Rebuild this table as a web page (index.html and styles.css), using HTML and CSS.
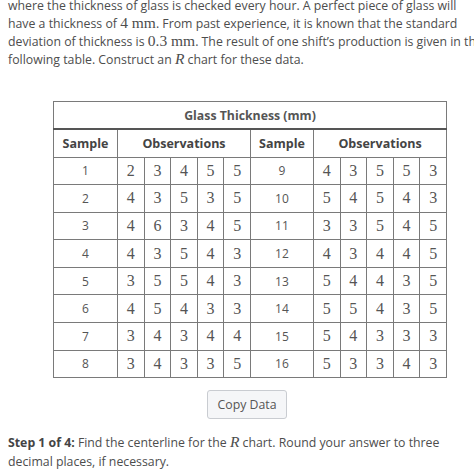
FILE: index.html
```html
<!DOCTYPE html>
<html>
<head>
<meta charset="utf-8">
<link rel="stylesheet" href="styles.css">
</head>
<body>
<div class="page">
  <p class="intro">where the thickness of glass is checked every hour. A perfect piece of glass will have a thickness of <span class="math">4 mm</span>. From past experience, it is known that the standard deviation of thickness is <span class="math">0.3 mm</span>. The result of one shift’s production is given in the following table. Construct an <span class="math var">R</span> chart for these data.</p>

  <table class="data">
    <colgroup>
      <col class="c-sample"><col class="c-obs"><col class="c-obs"><col class="c-obs"><col class="c-obs"><col class="c-obs">
      <col class="c-sample2"><col class="c-obs"><col class="c-obs"><col class="c-obs"><col class="c-obs"><col class="c-obs">
    </colgroup>
    <thead>
      <tr class="title-row"><th colspan="12">Glass Thickness (mm)</th></tr>
      <tr class="head-row"><th>Sample</th><th colspan="5">Observations</th><th>Sample</th><th colspan="5">Observations</th></tr>
    </thead>
    <tbody>
      <tr><td class="s">1</td><td>2</td><td>3</td><td>4</td><td>5</td><td>5</td><td class="s">9</td><td>4</td><td>3</td><td>5</td><td>5</td><td>3</td></tr>
      <tr><td class="s">2</td><td>4</td><td>3</td><td>5</td><td>3</td><td>5</td><td class="s">10</td><td>5</td><td>4</td><td>5</td><td>4</td><td>3</td></tr>
      <tr><td class="s">3</td><td>4</td><td>6</td><td>3</td><td>4</td><td>5</td><td class="s">11</td><td>3</td><td>3</td><td>5</td><td>4</td><td>5</td></tr>
      <tr><td class="s">4</td><td>4</td><td>3</td><td>5</td><td>4</td><td>3</td><td class="s">12</td><td>4</td><td>3</td><td>4</td><td>4</td><td>5</td></tr>
      <tr><td class="s">5</td><td>3</td><td>5</td><td>5</td><td>4</td><td>3</td><td class="s">13</td><td>5</td><td>4</td><td>4</td><td>3</td><td>5</td></tr>
      <tr><td class="s">6</td><td>4</td><td>5</td><td>4</td><td>3</td><td>3</td><td class="s">14</td><td>5</td><td>5</td><td>4</td><td>3</td><td>5</td></tr>
      <tr><td class="s">7</td><td>3</td><td>4</td><td>3</td><td>4</td><td>4</td><td class="s">15</td><td>5</td><td>4</td><td>3</td><td>3</td><td>3</td></tr>
      <tr><td class="s">8</td><td>3</td><td>4</td><td>3</td><td>3</td><td>5</td><td class="s">16</td><td>5</td><td>3</td><td>3</td><td>4</td><td>3</td></tr>
    </tbody>
  </table>

  <div class="actions"><button class="copy-btn" type="button">Copy Data</button></div>

  <p class="step"><b>Step 1 of 4:</b> Find the centerline for the <span class="math var">R</span> chart. Round your answer to three decimal places, if necessary.</p>
</div>
</body>
</html>
```
FILE: styles.css
```css
html, body {
  margin: 0;
  padding: 0;
  overflow: hidden;
  background: #fff;
}
body {
  font-family: "Open Sans", "Liberation Sans", sans-serif;
  color: #4d4d4d;
}
.page {
  width: 478px;
  padding-left: 8px;
}
.intro {
  margin: -3px 0 0 0;
  font-size: 12.3px;
  line-height: 18px;
}
.math {
  font-family: "Liberation Serif", "DejaVu Serif", serif;
  font-size: 15.5px;
  line-height: 1;
}
.var {
  font-style: italic;
}
.data {
  margin: 32px 0 0 45px;
  border-collapse: collapse;
  table-layout: fixed;
  width: 393px;
  border: 1px solid #7a7a7a;
}
.c-sample { width: 64px; }
.c-sample2 { width: 63px; }
.c-obs { width: 26.6px; }
.data th, .data td {
  border: 1px solid #7a7a7a;
  padding: 0;
  text-align: center;
}
.title-row th {
  height: 26px;
  font-size: 12.3px;
  font-weight: 700;
  color: #555;
  border-bottom: 2px solid #555;
}
.head-row th {
  height: 26.5px;
  font-size: 12.5px;
  font-weight: 700;
  color: #444;
}
.data td {
  height: 26.6px;
  font-family: "Liberation Serif", "DejaVu Serif", serif;
  font-size: 16px;
  color: #555;
}
.data td.s {
  font-family: "Open Sans", "Liberation Sans", sans-serif;
  font-size: 12px;
  color: #555;
}
.actions {
  display: flex;
  justify-content: center;
  margin-top: 12px;
}
.copy-btn {
  font-family: "Open Sans", "Liberation Sans", sans-serif;
  font-size: 12.3px;
  color: #555;
  background: #f5f6f8;
  border: 1px solid #c9ccd1;
  border-radius: 3px;
  width: 80px;
  height: 29px;
  padding: 0;
}
.step {
  margin: 14px 0 0 0;
  font-size: 12.3px;
  line-height: 19px;
}
.step b {
  color: #444;
}
```
